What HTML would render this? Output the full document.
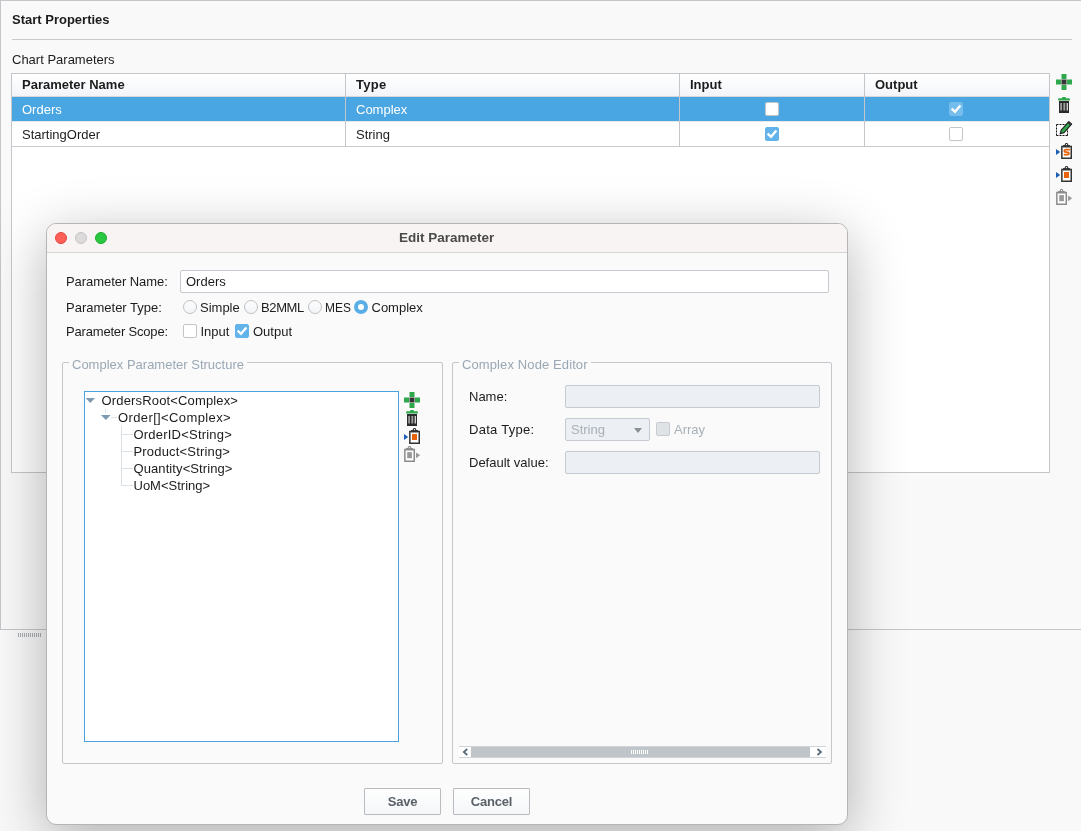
<!DOCTYPE html>
<html><head><meta charset="utf-8">
<style>
*{margin:0;padding:0;box-sizing:border-box}
html,body{will-change:transform;width:1081px;height:831px;overflow:hidden;background:#f9f9f9;font-family:"Liberation Sans",sans-serif;font-size:13px;color:#1c1c1c}
.a{position:absolute}
.t{position:absolute;white-space:nowrap;line-height:15px;font-size:13px}
.b{font-weight:bold}
#panel{left:0;top:0;width:1081px;height:630px;border-top:1px solid #c3c7cb;border-left:1px solid #c3c7cb;border-bottom:1px solid #c3c7cb;background:#f9f9f9}
#sep{left:12px;top:39px;width:1060px;height:1px;background:#c8ccd0}
#tbl{left:11px;top:73px;width:1039px;height:400px;border:1px solid #c3c7cb;background:#fff}
.hdr{left:0;top:0;width:1037px;height:23px;background:linear-gradient(#ffffff,#f2f5f8);border-bottom:1px solid #d8d6d6}
.sel{left:0;top:23px;width:1037px;height:24px;background:#49a6e2}
.gl{left:0;top:47px;width:1037px;height:1px;background:#e6e8ea}
.row2{left:0;top:48px;width:1037px;height:25px;border-bottom:1px solid #c8ccd0}
.vl{position:absolute;width:1px;background:#c3c7cb}
.cb{position:absolute;width:14px;height:14px;border-radius:2px;border:1px solid #c3c6c9;background:#fff}
.cbc{background:#62b3ea;border-color:#62b3ea}
.cb svg{position:absolute;left:1px;top:1px}
#dlg{left:46px;top:223px;width:802px;height:602px;border-radius:10px;background:#fafafa;border:1px solid #b5b5b5;box-shadow:0 14px 56px rgba(0,0,0,.30)}
#title{left:0;top:0;width:800px;height:29px;background:#f8f4f4;border-bottom:1px solid #d5d3d3;border-radius:9px 9px 0 0}
.dot{position:absolute;width:12px;height:12px;border-radius:50%}
.fld{position:absolute;border:1px solid #c5cad0;background:#fff;border-radius:2px}
.dis{background:#eceff3}
.grp{position:absolute;border:1px solid #c3c7cb;border-radius:2px}
.gt{color:#9aa8b4;background:#fafafa;padding:0 3px}
.radio{position:absolute;width:14px;height:14px;border-radius:50%;border:1px solid #bfc2c5;background:linear-gradient(#fdfdfe,#f2f4f7)}
.btn{position:absolute;width:77px;height:27px;border:1px solid #b8bcc0;background:linear-gradient(#fff,#f4f6f8);font-weight:bold;color:#5a6168;text-align:center;line-height:25px;font-size:13px;letter-spacing:-0.2px;border-radius:1px}
.tri{position:absolute;width:0;height:0;border-left:4.5px solid transparent;border-right:4.5px solid transparent;border-top:5px solid #7d9ab3}
.tl{position:absolute;background:#dde2e7}
svg{position:absolute;overflow:visible}
</style></head><body>
<div id="panel" class="a"></div>
<svg style="left:0;top:630px" width="50" height="10"><g fill="#a8aeb4"><rect x="18" y="3" width="1" height="4"/><rect x="20" y="3" width="1" height="4"/><rect x="22" y="3" width="1" height="4"/><rect x="24" y="3" width="1" height="4"/><rect x="26" y="3" width="1" height="4"/><rect x="28" y="3" width="1" height="4"/><rect x="30" y="3" width="1" height="4"/><rect x="32" y="3" width="1" height="4"/><rect x="34" y="3" width="1" height="4"/><rect x="36" y="3" width="1" height="4"/><rect x="38" y="3" width="1" height="4"/><rect x="40" y="3" width="1" height="4"/></g></svg>
<div class="t b" style="left:12px;top:12px">Start Properties</div>
<div id="sep" class="a"></div>
<div class="t" style="left:12px;top:52px">Chart Parameters</div>
<div id="tbl" class="a">
  <div class="hdr a"></div>
  <div class="sel a"></div>
  <div class="gl a"></div>
  <div class="row2 a"></div>
  <div class="vl" style="left:333px;top:0;height:73px"></div>
  <div class="vl" style="left:667px;top:0;height:73px"></div>
  <div class="vl" style="left:852px;top:0;height:73px"></div>
  <div class="t b" style="left:10px;top:3px">Parameter Name</div>
  <div class="t b" style="left:344px;top:3px;letter-spacing:0.3px">Type</div>
  <div class="t b" style="left:678px;top:3px">Input</div>
  <div class="t b" style="left:863px;top:3px">Output</div>
  <div class="t" style="left:10px;top:28px;color:#fff">Orders</div>
  <div class="t" style="left:344px;top:28px;color:#fff">Complex</div>
  <div class="t" style="left:10px;top:53px">StartingOrder</div>
  <div class="t" style="left:344px;top:53px">String</div>
</div>
<div class="cb" style="left:765px;top:102px"></div>
<div class="cb" style="left:949px;top:102px;background:#74bdec;border-color:#74bdec"><svg width="14" height="14" style="left:-1px;top:-1px"><path d="M2.6 6.6 L6 9.8 L11.4 3.4" stroke="#fff" stroke-width="2.4" fill="none"/></svg></div>
<div class="cb cbc" style="left:765px;top:127px"><svg width="14" height="14" style="left:-1px;top:-1px"><path d="M2.6 6.6 L6 9.8 L11.4 3.4" stroke="#fff" stroke-width="2.4" fill="none"/></svg></div>
<div class="cb" style="left:949px;top:127px"></div>

<!-- right toolbar -->
<svg width="0" height="0" style="left:0;top:0">
<defs>
 <g id="i-plus">
  <rect x="-0.5" y="-0.5" width="17" height="17" fill="none"/>
  <rect x="5.5" y="0" width="5" height="5" fill="#2ea84a"/>
  <rect x="0" y="5.5" width="5" height="5" fill="#2ea84a"/>
  <rect x="5.5" y="5.5" width="5" height="5" fill="#333"/>
  <rect x="11" y="5.5" width="5" height="5" fill="#2ea84a"/>
  <rect x="5.5" y="11" width="5" height="5" fill="#2ea84a"/>
 </g>
 <g id="i-trash">
  <rect x="6" y="0" width="4" height="2" rx="1" fill="#2ea84a"/>
  <rect x="2" y="1.2" width="12" height="2.4" rx="1.2" fill="#2ea84a"/>
  <rect x="3" y="4" width="10" height="12" fill="#2b2b2b"/>
  <rect x="4.2" y="6" width="1.8" height="7.5" fill="#9a9a9a"/>
  <rect x="7.4" y="6" width="1.8" height="7.5" fill="#a0a0a0"/>
  <rect x="10.6" y="6" width="1.4" height="7.5" fill="#d0d0d0"/>
 </g>
 <g id="i-edit">
  <path d="M0.5 4.5 H12.5 M0.5 15.5 H12.5 M0.5 4.5 V15.5 M11.5 4.5 V15.5" fill="none" stroke="#111" stroke-width="1" stroke-dasharray="2 1"/>
  <path d="M4.2 13.8 L5.2 10.2 L12.8 1.6 L15.6 4.2 L8 12.6 Z" fill="#2ea84a" stroke="#222" stroke-width="1.2" stroke-linejoin="round"/>
  <path d="M11.6 3 L14.4 5.6 L15.8 4.1 L13 1.4 Z" fill="#333"/>
 </g>
 <g id="i-clip">
  <rect x="6" y="3.5" width="9" height="11.5" fill="#fff"/>
  <path d="M5.1 2.7 H16 V15.9 H5.1 Z M6.6 4.1 V14.4 H14.5 V4.1 Z" fill="#333" fill-rule="evenodd"/>
  <path d="M6.8 4.6 L7 2.2 L8.8 1.8 L9.5 0 L11.5 0 L12.2 1.8 L14 2.2 L14.2 4.6 Z" fill="#333"/>
  <circle cx="10.5" cy="1.6" r="0.7" fill="#fff"/>
 </g>
 <g id="i-clipS">
  <path d="M0 6 L4.2 9 L0 12 Z" fill="#1a5fb4"/>
  <use href="#i-clip"/>
  <path d="M13.9 6.7 L10 6.7 Q8.3 6.7 8.4 8.1 Q8.5 9.2 10.6 9.2 Q12.9 9.2 12.9 10.4 Q12.9 11.6 10.8 11.6 L7.8 11.6" fill="none" stroke="#e8630a" stroke-width="1.8"/>
 </g>
 <g id="i-clipO">
  <path d="M0 6 L4.2 9 L0 12 Z" fill="#1a5fb4"/>
  <use href="#i-clip"/>
  <rect x="8" y="6" width="5" height="6" fill="#e8630a"/>
 </g>
 <g id="i-clipG">
  <rect x="1" y="3.5" width="9" height="11.5" fill="#fff"/>
  <path d="M0.1 2.7 H11 V15.9 H0.1 Z M1.6 4.1 V14.4 H9.5 V4.1 Z" fill="#8a8a8a" fill-rule="evenodd"/>
  <path d="M1.8 4.6 L2 2.2 L3.8 1.8 L4.5 0 L6.5 0 L7.2 1.8 L9 2.2 L9.2 4.6 Z" fill="#8a8a8a"/>
  <circle cx="5.5" cy="1.6" r="0.7" fill="#fff"/>
  <rect x="3.2" y="6.1" width="4.7" height="6.1" fill="#999"/>
  <path d="M12 6.4 L16.2 9.3 L12 12.2 Z" fill="#999"/>
 </g>
</defs>
</svg>
<svg style="left:1056px;top:74px" width="16" height="16"><use href="#i-plus"/></svg>
<svg style="left:1056px;top:97px" width="16" height="16"><use href="#i-trash"/></svg>
<svg style="left:1056px;top:120px" width="16" height="16"><use href="#i-edit"/></svg>
<svg style="left:1056px;top:143px" width="16" height="16"><use href="#i-clipS"/></svg>
<svg style="left:1056px;top:166px" width="16" height="16"><use href="#i-clipO"/></svg>
<svg style="left:1056px;top:189px" width="16" height="16"><use href="#i-clipG"/></svg>

<div id="dlg" class="a">
  <div id="title" class="a"></div>
  <div class="dot" style="left:8px;top:8px;background:#fe5f57;border:1px solid #e2463f"></div>
  <div class="dot" style="left:28px;top:8px;background:#dcdadb;border:1px solid #c6c4c4"></div>
  <div class="dot" style="left:48px;top:8px;background:#2ac840;border:1px solid #1eaa2c"></div>
</div>
<div class="t b" style="left:399px;top:230px;color:#4a4a4a;font-size:13.5px">Edit Parameter</div>

<div class="t" style="left:66px;top:274px;letter-spacing:-0.06px">Parameter Name:</div>
<div class="fld" style="left:180px;top:270px;width:649px;height:23px"></div>
<div class="t" style="left:186px;top:274px">Orders</div>
<div class="t" style="left:66px;top:300px">Parameter Type:</div>
<div class="t" style="left:66px;top:324px;letter-spacing:-0.18px">Parameter Scope:</div>

<div class="radio" style="left:183px;top:300px"></div><div class="t" style="left:200px;top:300px">Simple</div>
<div class="radio" style="left:244px;top:300px"></div><div class="t" style="left:261px;top:300px;letter-spacing:-0.37px">B2MML</div>
<div class="radio" style="left:308px;top:300px"></div><div class="t" style="left:325px;top:300px;transform:scaleX(.92);transform-origin:0 0">MES</div>
<div class="radio" style="left:354px;top:300px;border:4.5px solid #5aaee8;background:#fff"></div><div class="t" style="left:371.5px;top:300px">Complex</div>
<div class="cb" style="left:183px;top:324px"></div><div class="t" style="left:200.5px;top:324px">Input</div>
<div class="cb cbc" style="left:235px;top:324px"><svg width="14" height="14" style="left:-1px;top:-1px"><path d="M2.6 6.6 L6 9.8 L11.4 3.4" stroke="#fff" stroke-width="2.4" fill="none"/></svg></div><div class="t" style="left:253px;top:324px">Output</div>

<div class="grp" style="left:62px;top:362px;width:381px;height:402px"></div>
<div class="t gt" style="left:69px;top:357px">Complex Parameter Structure</div>
<div class="grp" style="left:452px;top:362px;width:380px;height:402px"></div>
<div class="t gt" style="left:459px;top:357px;letter-spacing:0.11px">Complex Node Editor</div>

<div class="a" style="left:84px;top:391px;width:315px;height:351px;border:1px solid #4aa3e0;background:#fff"></div>
<svg style="left:404px;top:392px" width="16" height="16"><use href="#i-plus"/></svg>
<svg style="left:404px;top:410px" width="16" height="16"><use href="#i-trash"/></svg>
<svg style="left:404px;top:428px" width="16" height="16"><use href="#i-clipO"/></svg>
<svg style="left:404px;top:446px" width="16" height="16"><use href="#i-clipG"/></svg>
<svg style="left:80px;top:390px" width="40" height="40"><path d="M5.6 8 L15 8 L10.3 13 Z M21 25 L30.7 25 L25.85 30 Z" fill="#7d9ab3"/></svg>
<div class="t" style="left:101.6px;top:393px;letter-spacing:0.15px">OrdersRoot&lt;Complex&gt;</div>
<div class="tl" style="left:105px;top:409px;width:1px;height:4px"></div>

<div class="tl" style="left:111px;top:417px;width:6px;height:1px"></div>
<div class="t" style="left:118px;top:410px;letter-spacing:0.38px">Order[]&lt;Complex&gt;</div>
<div class="tl" style="left:121px;top:426px;width:1px;height:60px"></div>
<div class="tl" style="left:122px;top:434px;width:11px;height:1px"></div>
<div class="tl" style="left:122px;top:451px;width:11px;height:1px"></div>
<div class="tl" style="left:122px;top:468px;width:11px;height:1px"></div>
<div class="tl" style="left:122px;top:485px;width:11px;height:1px"></div>
<div class="t" style="left:133.5px;top:427px;letter-spacing:0.21px">OrderID&lt;String&gt;</div>
<div class="t" style="left:133.5px;top:444px;letter-spacing:0.18px">Product&lt;String&gt;</div>
<div class="t" style="left:133.5px;top:461px;letter-spacing:0.09px">Quantity&lt;String&gt;</div>
<div class="t" style="left:133.5px;top:478px">UoM&lt;String&gt;</div>

<div class="t" style="left:469px;top:389px">Name:</div>
<div class="fld dis" style="left:565px;top:385px;width:255px;height:23px"></div>
<div class="t" style="left:469px;top:422px;letter-spacing:0.28px">Data Type:</div>
<div class="fld dis" style="left:565px;top:418px;width:85px;height:23px;border-radius:2px"></div>
<div class="t" style="left:571px;top:422px;color:#a8b0b8">String</div>
<div class="tri" style="left:634px;top:428px;border-top-color:#8a9098;border-left-width:4px;border-right-width:4px"></div>
<div class="cb" style="left:656px;top:422px;background:#e0e3e6;border-color:#c8ccd0"></div>
<div class="t" style="left:674px;top:422px;color:#a8b0b8">Array</div>
<div class="t" style="left:469px;top:455px">Default value:</div>
<div class="fld dis" style="left:565px;top:451px;width:255px;height:23px"></div>

<div class="a" style="left:459px;top:746px;width:367px;height:12px;border-top:1px solid #d0d4d8;border-bottom:1px solid #d0d4d8;background:#c0c5ca"></div>
<div class="a" style="left:459px;top:747px;width:12px;height:10px;background:#fff"></div>
<div class="a" style="left:810px;top:747px;width:16px;height:10px;background:#fff"></div>
<svg style="left:459px;top:745px" width="370" height="14">
 <path d="M8.3 4 L4.8 7 L8.3 10" fill="none" stroke="#566878" stroke-width="1.7"/>
 <path d="M358.5 4 L362 7 L358.5 10" fill="none" stroke="#566878" stroke-width="1.7"/>
 <g fill="#fff"><rect x="172" y="5" width="1" height="4"/><rect x="174" y="5" width="1" height="4"/><rect x="176" y="5" width="1" height="4"/><rect x="178" y="5" width="1" height="4"/><rect x="180" y="5" width="1" height="4"/><rect x="182" y="5" width="1" height="4"/><rect x="184" y="5" width="1" height="4"/><rect x="186" y="5" width="1" height="4"/><rect x="188" y="5" width="1" height="4"/></g>
</svg>

<div class="btn" style="left:364px;top:788px">Save</div>
<div class="btn" style="left:453px;top:788px">Cancel</div>
</body></html>
